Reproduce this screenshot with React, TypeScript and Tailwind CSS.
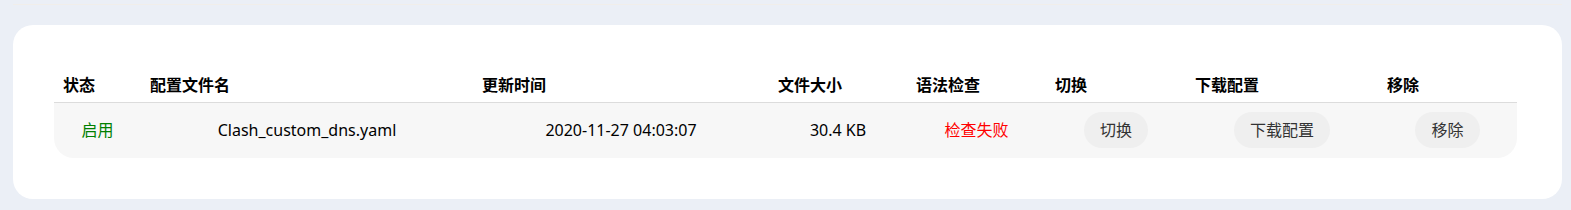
import React from 'react';

interface ProfileRow {
  status: string;
  name: string;
  updatedAt: string;
  size: string;
  check: string;
}

const HEADERS = ['状态', '配置文件名', '更新时间', '文件大小', '语法检查', '切换', '下载配置', '移除'];
const COL_WIDTHS = ['w-[87px]', 'w-[332px]', 'w-[296px]', 'w-[138px]', 'w-[139px]', 'w-[140px]', 'w-[192px]', 'w-[139px]'];

const rows: ProfileRow[] = [
  { status: '启用', name: 'Clash_custom_dns.yaml', updatedAt: '2020-11-27 04:03:07', size: '30.4 KB', check: '检查失败' },
];

const PillButton: React.FC<{ label: string }> = ({ label }) => (
  <button className="h-[36px] px-4 rounded-full bg-[#efefef] text-[#333] text-[16px] leading-none cursor-pointer">
    {label}
  </button>
);

const App: React.FC = () => {
  return (
    <div
      className="w-full h-[210px] bg-[#ebeff6] pl-[13px] pr-[9px] pt-[4px] overflow-hidden"
      style={{ fontFamily: '"Noto Sans", "Noto Sans CJK SC", sans-serif' }}
    >
      {/* faint edge of the block above */}
      <div className="h-px bg-[#f1eeea]" />

      <div className="mt-[20px] h-[174px] bg-white rounded-[20px] pt-[43px] pl-[41px] pr-[45px]">
        <table className="w-full table-fixed border-collapse text-[16px] text-black">
          <colgroup>
            {COL_WIDTHS.map((w, i) => (
              <col key={i} className={w} />
            ))}
          </colgroup>
          <thead>
            <tr className="border-b border-[#dcdcdc]">
              {HEADERS.map((h) => (
                <th key={h} className="h-[34px] pl-[9px] text-left font-bold align-middle">
                  {h}
                </th>
              ))}
            </tr>
          </thead>
          <tbody>
            {rows.map((r) => (
              <tr key={r.name} className="bg-[#f7f7f7] h-[56px] text-center">
                <td className="rounded-bl-[20px] text-[#008000]">{r.status}</td>
                <td>{r.name}</td>
                <td>{r.updatedAt}</td>
                <td>{r.size}</td>
                <td className="text-[#ff0000]">{r.check}</td>
                <td><PillButton label="切换" /></td>
                <td><PillButton label="下载配置" /></td>
                <td className="rounded-br-[20px]"><PillButton label="移除" /></td>
              </tr>
            ))}
          </tbody>
        </table>
      </div>
    </div>
  );
};

export default App;
